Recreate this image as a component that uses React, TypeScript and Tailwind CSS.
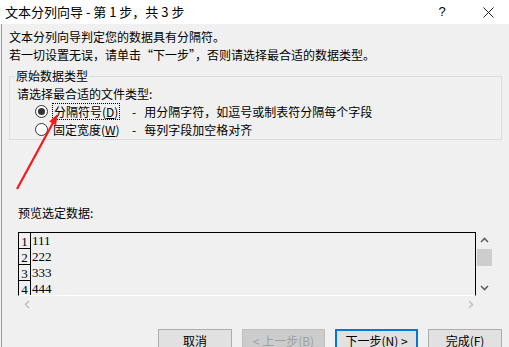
import React from "react";

const ui = "font-['Noto_Sans_CJK_SC','Microsoft_YaHei',sans-serif]";
const serif = "font-['Liberation_Serif','Noto_Serif_CJK_SC',serif]";

function Radio({ checked }: { checked?: boolean }) {
  return (
    <span className="w-[13px] h-[13px] rounded-full border border-[#333333] bg-white flex items-center justify-center shrink-0">
      {checked && <span className="w-[7px] h-[7px] rounded-full bg-[#333333]" />}
    </span>
  );
}

function Chevron({ dir, color }: { dir: "up" | "down" | "left" | "right"; color: string }) {
  const d = {
    up: "M1 6 L4.5 2.5 L8 6",
    down: "M1 3 L4.5 6.5 L8 3",
    left: "M6 1 L2.5 4.5 L6 8",
    right: "M3 1 L6.5 4.5 L3 8",
  }[dir];
  return (
    <svg width="9" height="9" viewBox="0 0 9 9">
      <path d={d} fill="none" stroke={color} strokeWidth="1.6" />
    </svg>
  );
}

const rows = ["111", "222", "333", "444"];

export default function App() {
  return (
    <div className={`relative w-[509px] h-[347px] overflow-hidden bg-[#f0f0f0] text-black ${ui}`}>
      {/* Title bar */}
      <div className="h-[24px] bg-white flex items-center pl-[5px] text-[13px] leading-[24px]">
        <span className="flex-1">文本分列向导 - 第 1 步，共 3 步</span>
        <span className="w-[14px] text-center mr-[34px] text-[13px] font-['Liberation_Sans',sans-serif]">?</span>
        <svg width="11" height="11" viewBox="0 0 11 11" className="mr-[15px]">
          <path d="M0.5 0.5 L10.5 10.5 M10.5 0.5 L0.5 10.5" stroke="#222" strokeWidth="1" />
        </svg>
      </div>

      {/* Body */}
      <div className="ml-px border-l border-[#a0a0a0] h-[323px] text-[12px]">
        <div className="pl-[7px] pt-[4px] leading-[18px]">
          <p>文本分列向导判定您的数据具有分隔符。</p>
          <p>若一切设置无误，请单击“下一步”，否则请选择最合适的数据类型。</p>
        </div>

        {/* Group box */}
        <div className="relative ml-[7px] mt-[12px] w-[493px] h-[64px] border border-[#dcdcdc] pl-[7px] pt-[9px]">
          <span className="absolute -top-[9px] left-[5px] px-px bg-[#f0f0f0] leading-[16px]">原始数据类型</span>
          <p className="leading-[16px]">请选择最合适的文件类型:</p>
          <div className="flex items-center h-[17px] mt-[1px] pl-[18px]">
            <Radio checked />
            <span className="w-[84px] pl-[4px]">
              <span className="inline-block border border-dotted border-black px-px leading-[15px]">
                分隔符号(<u>D</u>)
              </span>
            </span>
            <span>-</span>
            <span className="ml-[8px]">用分隔字符，如逗号或制表符分隔每个字段</span>
          </div>
          <div className="flex items-center h-[17px] mt-[1px] pl-[18px]">
            <Radio />
            <span className="w-[84px] pl-[5px]">
              固定宽度(<u>W</u>)
            </span>
            <span>-</span>
            <span className="ml-[8px]">每列字段加空格对齐</span>
          </div>
        </div>

        <p className="ml-[16px] mt-[65px] leading-[16px]">预览选定数据:</p>

        {/* Preview */}
        <div className="ml-[16px] mt-[11px] flex">
          <div className="w-[458px] h-[64px] border-l border-t border-r border-black border-b border-b-white overflow-hidden">
            {rows.map((r, i) => (
              <div key={r} className="flex h-[16px]">
                <div className={`w-[12px] h-[16px] border-r border-b border-black flex items-end justify-center text-[13px] leading-[13px] ${serif}`}>
                  {i + 1}
                </div>
                <div className={`pl-px text-[13px] leading-[16px] ${serif}`}>{r}</div>
              </div>
            ))}
          </div>
          <div className="w-[17px] h-[64px] flex flex-col items-center">
            <div className="h-[17px] flex items-center justify-center">
              <Chevron dir="up" color="#606060" />
            </div>
            <div className="w-[15px] h-[17px] bg-[#cdcdcd]" />
            <div className="flex-1" />
            <div className="h-[17px] flex items-center justify-center">
              <Chevron dir="down" color="#606060" />
            </div>
          </div>
        </div>
        <div className="ml-[21px] w-[452px] h-[16px] flex items-center justify-between">
          <Chevron dir="left" color="#c2c2c2" />
          <Chevron dir="right" color="#c2c2c2" />
        </div>

        {/* Buttons */}
        <div className="mt-[17px] flex justify-end gap-[10px] pr-[7px]">
          <button type="button" className="w-[74px] h-[23px] bg-[#e1e1e1] border border-[#adadad] leading-[21px]">
            取消
          </button>
          <button type="button" disabled className="w-[83px] h-[23px] bg-[#cccccc] border border-[#bfbfbf] text-[#a0a0a0] leading-[21px]">
            &lt; 上一步(<u>B</u>)
          </button>
          <button type="button" className="w-[83px] h-[23px] bg-[#e1e1e1] border-2 border-[#0078d7] leading-[19px]">
            下一步(<u>N</u>) &gt;
          </button>
          <button type="button" className="w-[74px] h-[23px] bg-[#e1e1e1] border border-[#adadad] leading-[21px]">
            完成(<u>F</u>)
          </button>
        </div>
      </div>

      {/* Red annotation arrow */}
      <svg className="absolute left-0 top-0 pointer-events-none" width="509" height="347">
        <line x1="17" y1="189" x2="54" y2="121" stroke="#f21b1b" strokeWidth="2.2" />
        <polygon points="57.5,114 56.2,125.2 49.2,121.4" fill="#f21b1b" />
      </svg>
    </div>
  );
}
